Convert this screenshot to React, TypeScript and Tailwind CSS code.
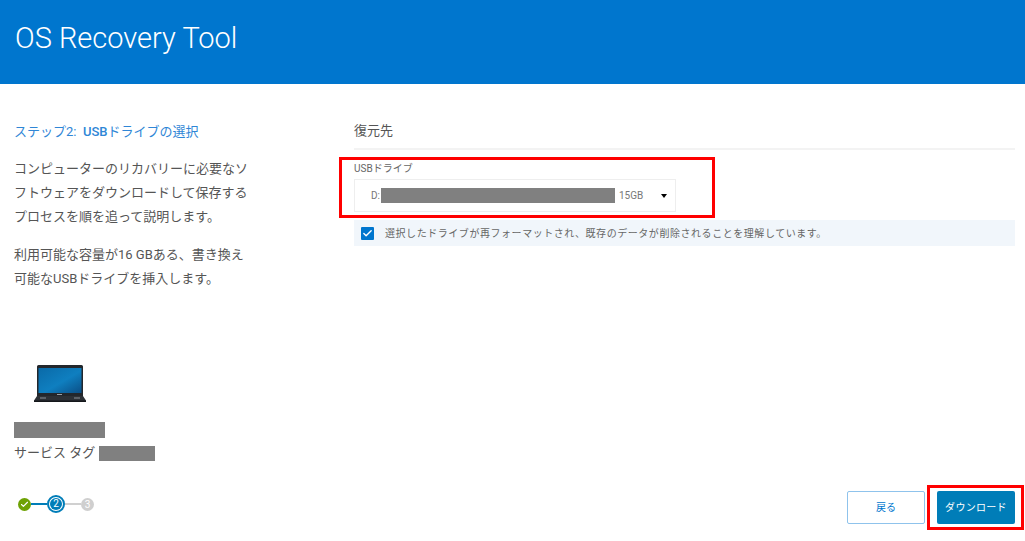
import React from 'react';
import { Check } from 'lucide-react';

const font = "font-['Roboto','Noto_Sans_CJK_JP',sans-serif]";

const Laptop = () => (
  <svg width="54" height="38" viewBox="0 0 54 38">
    <defs>
      <linearGradient id="scr" x1="0" y1="0" x2="1" y2="1">
        <stop offset="0" stopColor="#0a6aa8" />
        <stop offset="0.55" stopColor="#0f7fc0" />
        <stop offset="1" stopColor="#0b4f86" />
      </linearGradient>
    </defs>
    <path d="M4 1.5 a1.5 1.5 0 0 1 1.5-1.5 h43 a1.5 1.5 0 0 1 1.5 1.5 V31 H4 Z" fill="#23272c" />
    <rect x="5.5" y="3" width="43" height="25" fill="url(#scr)" />
    <path d="M4 31 h46 l3 4.5 a1 1 0 0 1-1 1.2 H2 a1 1 0 0 1-1-1.2 Z" fill="#2d3136" />
    <rect x="1" y="35.5" width="52" height="1.5" fill="#14171a" />
    <rect x="7" y="32.5" width="6" height="1" fill="#8a9096" />
    <rect x="41" y="32.5" width="6" height="1" fill="#8a9096" />
    <rect x="24" y="29" width="5" height="1" fill="#9aa0a6" />
  </svg>
);

const Stepper = () => (
  <div className="flex items-center pl-[18px] h-[20px]">
    <div className="w-[13px] h-[13px] rounded-full bg-[#6ea204] flex items-center justify-center">
      <Check className="w-[9px] h-[9px] text-white" strokeWidth={3} />
    </div>
    <div className="w-[16px] h-[2px] bg-[#007db8]" />
    <div className="w-[18px] h-[18px] rounded-full border-2 border-[#007db8] bg-white flex items-center justify-center">
      <div className="w-[12px] h-[12px] rounded-full bg-[#007db8] text-white text-[10px] leading-[12px] text-center">2</div>
    </div>
    <div className="w-[16px] h-[2px] bg-[#d0d0d0]" />
    <div className="w-[13px] h-[13px] rounded-full bg-[#cfcfcf] text-white text-[10px] leading-[13px] text-center">3</div>
  </div>
);

const App: React.FC = () => {
  return (
    <div className={`relative w-[1025px] h-[541px] overflow-hidden bg-white flex flex-col ${font}`}>
      <header className="h-[84px] shrink-0 bg-[#0076ce] flex items-center pl-[15px] pb-[7px]">
        <h1 className="text-[29px] font-light leading-none text-white">OS Recovery Tool</h1>
      </header>

      <div className="flex flex-1 min-h-0 pr-[10px]">
        {/* left column */}
        <aside className="w-[354px] shrink-0 pl-[14px] pt-[40px] flex flex-col">
          <h2 className="text-[13px] leading-[16px] text-[#2f86d6] whitespace-nowrap">
            ステップ2:&nbsp; <span className="font-medium">USB</span>ドライブの選択
          </h2>
          <p className="w-[236px] mt-[17px] text-[13px] leading-[24px] text-[#555]">
            コンピューターのリカバリーに必要なソフトウェアをダウンロードして保存するプロセスを順を追って説明します。
          </p>
          <p className="w-[236px] mt-[14px] text-[13px] leading-[24px] text-[#555]">
            利用可能な容量が16 GBある、書き換え可能なUSBドライブを挿入します。
          </p>
          <div className="mt-[74px] pl-[19px]">
            <Laptop />
          </div>
          <div className="mt-[19px] w-[91px] h-[16px] bg-[#808080]" />
          <div className="mt-[7px] flex items-center h-[16px] text-[13px] text-[#555]">
            <span className="w-[85px] whitespace-nowrap">サービス タグ</span>
            <span className="w-[56px] h-[15px] bg-[#808080]" />
          </div>
          <div className="mt-[33px] -ml-[14px]">
            <Stepper />
          </div>
        </aside>

        {/* right column */}
        <main className="flex-1 min-w-0 pt-[38px] flex flex-col">
          <div className="h-[28px] border-b-2 border-[#f3f3f3] text-[13px] leading-[18px] text-[#555]">復元先</div>
          <label className="block mt-[12px] text-[10px] leading-[14px] text-[#666]">USBドライブ</label>
          <div className="mt-[3px] w-[322px] h-[33px] border border-[#eeeeee] flex items-center pl-[16px] text-[10px] text-[#777]">
            <span className="w-[10px]">D:</span>
            <span className="w-[234px] h-[15px] bg-[#808080]" />
            <span className="ml-[4px]">15GB</span>
            <span className="ml-[18px] w-0 h-0 border-x-[3.5px] border-x-transparent border-t-[4px] border-t-black" />
          </div>
          <div className="mt-[8px] h-[26px] bg-[#f1f6fb] flex items-center pl-[7px]">
            <span className="w-[13px] h-[13px] rounded-[1px] bg-[#0076ce] flex items-center justify-center">
              <Check className="w-[11px] h-[11px] text-white" strokeWidth={3} />
            </span>
            <span className="ml-[11px] text-[10px] tracking-[0.55px] text-[#666] whitespace-nowrap">
              選択したドライブが再フォーマットされ、既存のデータが削除されることを理解しています。
            </span>
          </div>
          <div className="mt-auto mb-[17px] flex justify-end gap-[12px]">
            <button className="w-[78px] h-[33px] rounded-[2px] border border-[#8fc3ec] bg-white text-[10px] text-[#0076ce]">戻る</button>
            <button className="w-[78px] h-[33px] rounded-[2px] bg-[#007db8] text-[10px] tracking-[0.3px] text-white">ダウンロード</button>
          </div>
        </main>
      </div>

      {/* annotation boxes */}
      <div className="absolute left-[339px] top-[157px] w-[376px] h-[61px] border-[3px] border-[#ff0000] pointer-events-none" />
      <div className="absolute left-[927px] top-[485px] w-[97px] h-[45px] border-[3px] border-[#ff0000] pointer-events-none" />
    </div>
  );
};

export default App;
